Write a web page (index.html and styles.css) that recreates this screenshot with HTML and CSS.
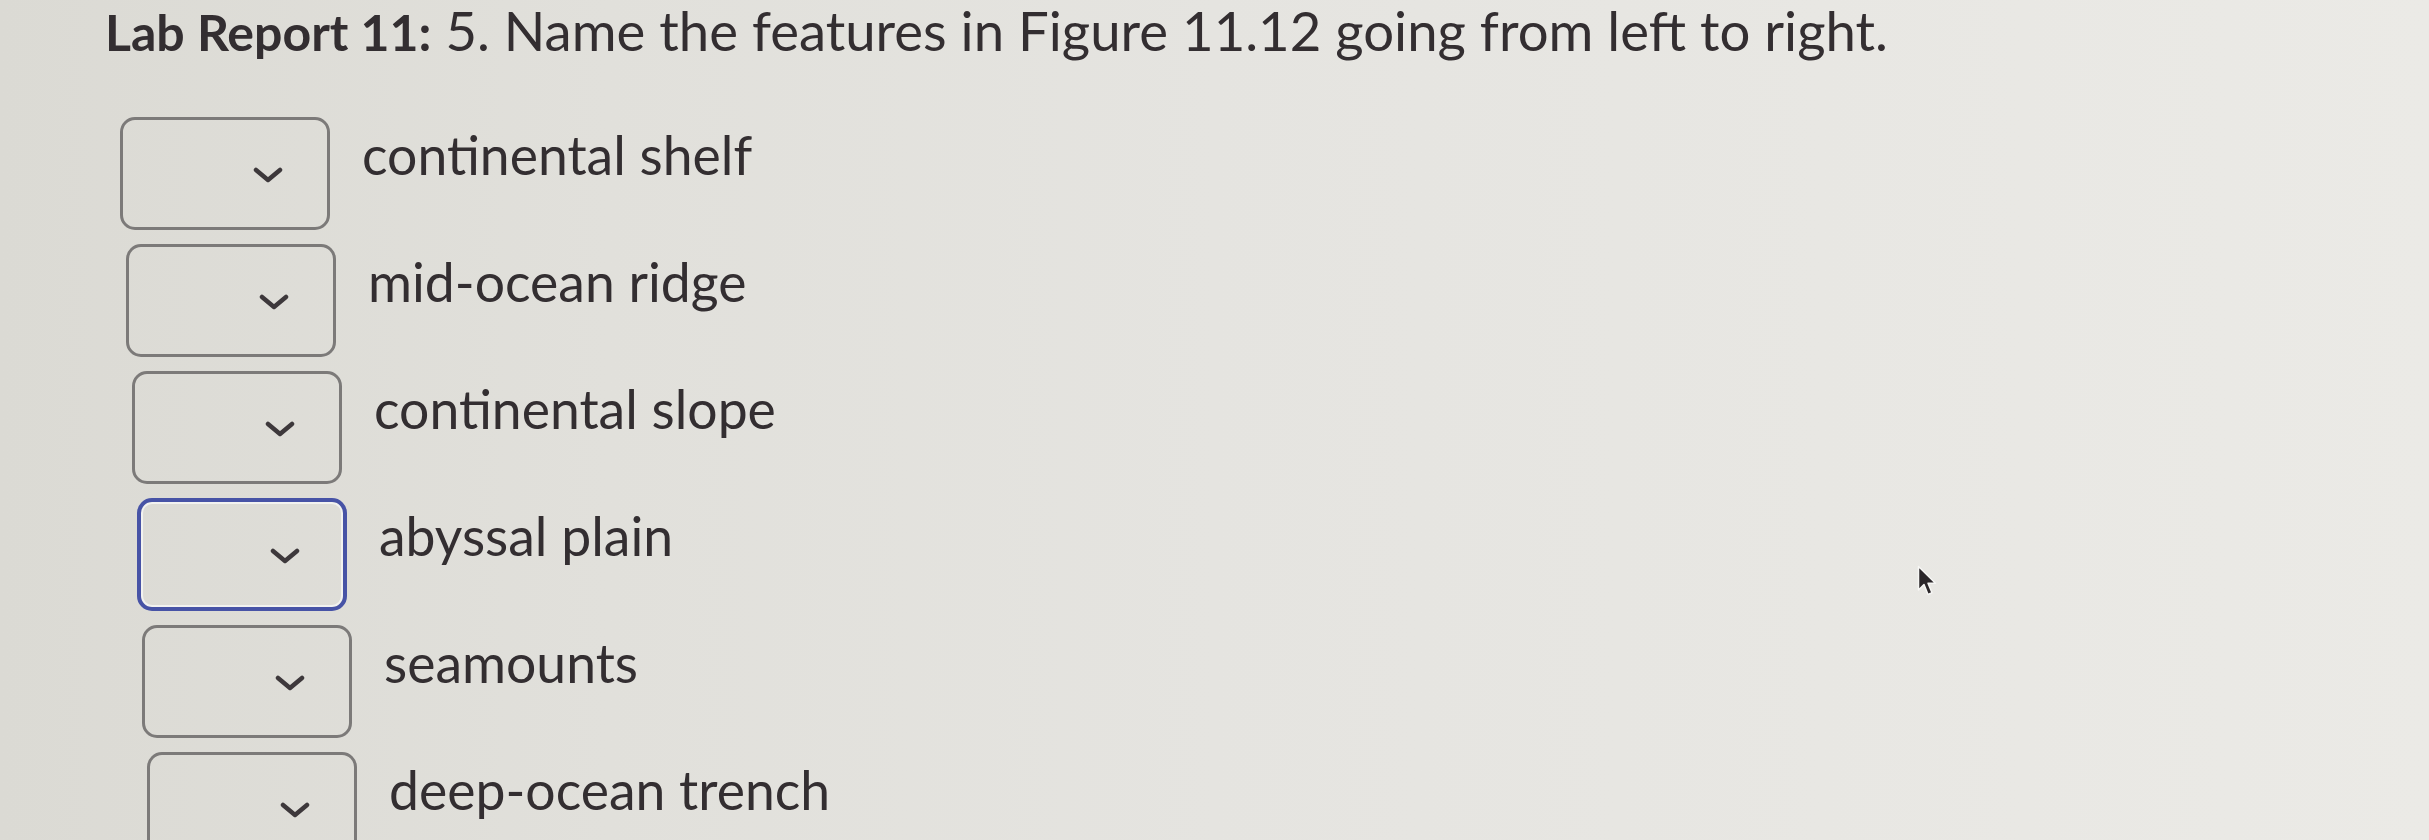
FILE: index.html
```html
<!DOCTYPE html>
<html lang="en">
<head>
<meta charset="utf-8">
<title>Lab Report 11</title>
<link rel="stylesheet" href="styles.css">
</head>
<body>
<main class="page">
  <h1 class="title"><strong>Lab Report 11:</strong> 5. Name the features in Figure 11.12 going from left to right.</h1>
  <ul class="items">
    <li class="item">
      <span class="select"><svg class="chev" viewBox="0 0 30 16"><path d="M3 3 L15 13 L27 3"/></svg></span>
      <span class="label">continental shelf</span>
    </li>
    <li class="item">
      <span class="select"><svg class="chev" viewBox="0 0 30 16"><path d="M3 3 L15 13 L27 3"/></svg></span>
      <span class="label">mid-ocean ridge</span>
    </li>
    <li class="item">
      <span class="select"><svg class="chev" viewBox="0 0 30 16"><path d="M3 3 L15 13 L27 3"/></svg></span>
      <span class="label">continental slope</span>
    </li>
    <li class="item">
      <span class="select focused"><svg class="chev" viewBox="0 0 30 16"><path d="M3 3 L15 13 L27 3"/></svg></span>
      <span class="label">abyssal plain</span>
    </li>
    <li class="item">
      <span class="select"><svg class="chev" viewBox="0 0 30 16"><path d="M3 3 L15 13 L27 3"/></svg></span>
      <span class="label">seamounts</span>
    </li>
    <li class="item">
      <span class="select"><svg class="chev" viewBox="0 0 30 16"><path d="M3 3 L15 13 L27 3"/></svg></span>
      <span class="label">deep-ocean trench</span>
    </li>
  </ul>
  <svg class="cursor" viewBox="0 0 20 32"><path d="M1.5 1.5 L1.5 25 L7 19.5 L11 29.5 L15 27.8 L11 18.2 L18.5 18.2 Z"/></svg>
</main>
</body>
</html>
```
FILE: styles.css
```css
html, body {
  margin: 0;
  padding: 0;
}
body {
  width: 2429px;
  height: 840px;
  overflow: hidden;
  background: linear-gradient(90deg, #dbdad4 0%, #e1e0db 25%, #e5e4e0 50%, #e8e7e3 75%, #ebeae6 100%);
  font-family: Lato, "Open Sans", sans-serif;
  color: #332e31;
}
.page {
  position: relative;
  height: 840px;
  box-sizing: border-box;
  padding: 0 0 0 105px;
}
.title {
  margin: 0;
  font-size: 54.5px;
  line-height: 60px;
  font-weight: 400;
  white-space: nowrap;
}
.title strong {
  font-size: 50px;
  font-weight: 700;
}
.items {
  list-style: none;
  margin: 55px 0 0 0;
  padding: 0 0 0 15px;
}
.item {
  display: flex;
  align-items: flex-start;
  gap: 32px;
  height: 113px;
  margin-bottom: 14px;
}
.item:nth-child(2) { margin-left: 6px; }
.item:nth-child(3) { margin-left: 12px; }
.item:nth-child(4) { margin-left: 17px; }
.item:nth-child(5) { margin-left: 22px; }
.item:nth-child(6) { margin-left: 27px; }
.select {
  flex: none;
  width: 210px;
  height: 113px;
  box-sizing: border-box;
  border: 3px solid #7c7a79;
  border-radius: 15px;
  display: flex;
  align-items: center;
  justify-content: flex-end;
  padding: 3px 44px 0 0;
}
.select.focused {
  border: 4px solid #4753a6;
  box-shadow: inset 0 0 0 2px #f2f2f0;
  padding-right: 43px;
}
.chev {
  width: 30px;
  height: 16px;
  fill: none;
  stroke: #3d383b;
  stroke-width: 4.5;
  stroke-linecap: round;
  stroke-linejoin: round;
}
.label {
  font-size: 53.5px;
  line-height: 60px;
  padding-top: 7px;
  white-space: nowrap;
}
.cursor {
  position: absolute;
  left: 1917px;
  top: 565px;
  width: 20px;
  height: 32px;
  fill: #2a2629;
  stroke: #f6f6f4;
  stroke-width: 1.5;
  stroke-linejoin: round;
}
```
